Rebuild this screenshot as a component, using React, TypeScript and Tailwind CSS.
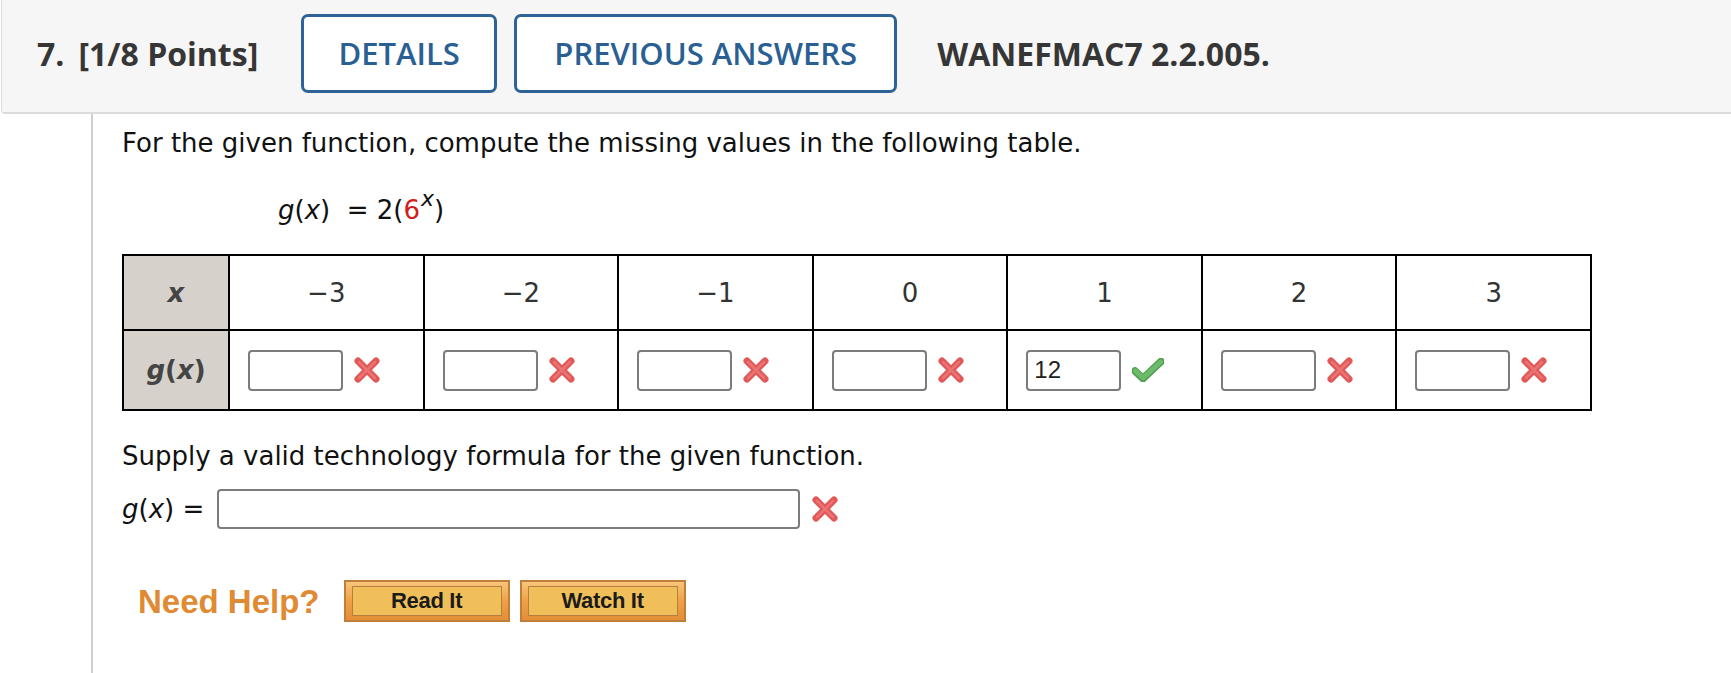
import React from "react";

const body = "font-['DejaVu_Sans',Verdana,sans-serif]";
const head = "font-['Open_Sans',sans-serif]";

function CrossMark() {
  return (
    <svg width="26" height="26" viewBox="0 0 26 26" className="shrink-0">
      <path d="M4 4 L22 22 M22 4 L4 22" stroke="#e15858" strokeWidth="7" strokeLinecap="round" />
      <path d="M5 5 L21 21 M21 5 L5 21" stroke="#ea7373" strokeWidth="2.5" strokeLinecap="round" />
    </svg>
  );
}

function CheckMark() {
  return (
    <svg width="32" height="24" viewBox="0 0 32 24" className="shrink-0">
      <path d="M3 13 L11 20.5 L29 3.5" fill="none" stroke="#4f9e4f" strokeWidth="7.5" strokeLinecap="round" strokeLinejoin="round" />
      <path d="M3.5 13 L11 20 L28.5 4" fill="none" stroke="#6cbb6c" strokeWidth="5" strokeLinecap="round" strokeLinejoin="round" />
    </svg>
  );
}

function Answer({ value, ok }: { value?: string; ok?: boolean }) {
  return (
    <div className="flex items-center gap-[11px] pl-[18px]">
      <div className="w-[95px] h-[41px] rounded-[4px] border-2 border-[#7c7c7c] bg-white flex items-center pl-[6px] font-['Liberation_Sans',Arial,sans-serif] text-[24px] text-[#222]">
        {value}
      </div>
      {ok ? <CheckMark /> : <CrossMark />}
    </div>
  );
}

function HelpButton({ label }: { label: string }) {
  return (
    <button className="w-[166px] h-[42px] border-2 border-[#bf7f3b] bg-gradient-to-b from-[#f9c57a] via-[#eea046] to-[#e48f38] p-[4px_6px] cursor-pointer">
      <div className="h-full border border-[#b5803f] bg-[#f1bf5a] flex items-center justify-center font-['Liberation_Sans',Arial,sans-serif] font-bold text-[22px] text-[#1b1b1b] tracking-[-0.3px]">
        {label}
      </div>
    </button>
  );
}

export default function App() {
  const xs = ["−3", "−2", "−1", "0", "1", "2", "3"];

  return (
    <div className={`w-[1731px] h-[673px] bg-white overflow-hidden ${body}`}>
      {/* question header */}
      <div className="h-[114px] ml-[1px] bg-[#f6f6f6] border-l border-b-2 border-[#dcdcdc] rounded-bl-[4px] pt-[14px] pl-[35px]">
        <div className={`h-[79px] flex items-center ${head}`}>
          <span className="font-bold text-[32px] text-[#363636]">7.</span>
          <span className="font-bold text-[32px] text-[#363636] ml-[14px]">[1/8 Points]</span>
          <button className="ml-[43px] w-[196px] h-[79px] rounded-[7px] border-[3px] border-[#2d6396] bg-white text-[31px] text-[#2a5f93] font-semibold">
            DETAILS
          </button>
          <button className="ml-[17px] w-[383px] h-[79px] rounded-[7px] border-[3px] border-[#2d6396] bg-white text-[31px] text-[#2a5f93] font-semibold">
            PREVIOUS ANSWERS
          </button>
          <span className="ml-[40px] font-bold text-[32px] text-[#363636]">WANEFMAC7 2.2.005.</span>
        </div>
      </div>

      {/* question body */}
      <div className="ml-[91px] h-[559px] border-l-2 border-[#cfcfcf] pl-[29px] pt-[14px] text-[26px] leading-[30px] text-[#111]">
        <p>For the given function, compute the missing values in the following table.</p>

        <p className="mt-[37px] pl-[156px]">
          <i>g</i>(<i>x</i>)&nbsp; = 2(<span className="text-[#d0201a]">6</span>
          <sup className="text-[22px] italic top-[-0.6em] ml-[1px]">x</sup>)
        </p>

        <div className="mt-[29px] w-[1470px] grid grid-cols-[104px_repeat(7,1fr)] grid-rows-[73px_78px] gap-[2px] p-[2px] bg-black">
          <div className="bg-[#d6d2cb] flex items-center justify-center font-bold italic text-[#444]">x</div>
          {xs.map((x) => (
            <div key={x} className="bg-white flex items-center justify-center text-[#333]">
              {x}
            </div>
          ))}
          <div className="bg-[#d6d2cb] flex items-center justify-center font-bold text-[#444]">
            <i>g</i>(<i>x</i>)
          </div>
          {xs.map((x) => (
            <div key={"a" + x} className="bg-white flex items-center">
              {x === "1" ? <Answer value="12" ok /> : <Answer />}
            </div>
          ))}
        </div>

        <p className="mt-[30px]">Supply a valid technology formula for the given function.</p>

        <div className="mt-[18px] flex items-center h-[40px]">
          <span>
            <i>g</i>(<i>x</i>) =
          </span>
          <div className="ml-[13px] w-[583px] h-[40px] rounded-[4px] border-2 border-[#7c7c7c] bg-white" />
          <div className="ml-[12px]">
            <CrossMark />
          </div>
        </div>

        <div className="mt-[51px] pl-[16px] flex items-center">
          <span className="font-['Liberation_Sans',Arial,sans-serif] font-bold text-[33px] text-[#e08a33] leading-none">
            Need Help?
          </span>
          <div className="ml-[24px] flex gap-[10px]">
            <HelpButton label="Read It" />
            <HelpButton label="Watch It" />
          </div>
        </div>
      </div>
    </div>
  );
}
